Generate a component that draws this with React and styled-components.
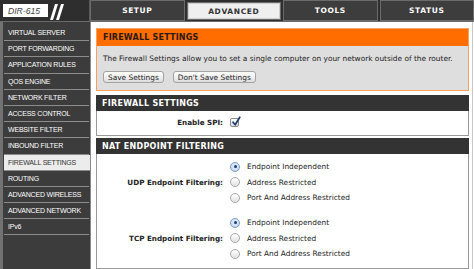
import React from "react";
import styled, { createGlobalStyle } from "styled-components";

const GlobalStyle = createGlobalStyle`
  html, body {
    margin: 0;
    padding: 0;
    background: #ffffff;
  }
  * {
    box-sizing: border-box;
  }
`;

const Page = styled.div`
  width: 474px;
  height: 269px;
  overflow: hidden;
  display: flex;
  flex-direction: column;
  font-family: "DejaVu Sans", Verdana, sans-serif;
  color: #222;
`;

const Header = styled.div`
  height: 22px;
  display: flex;
  background: #2e2e2e;
  border-bottom: 1px solid #6a6a6a;
`;

const LogoArea = styled.div`
  width: 90px;
  flex: none;
  border-right: 1px solid #5a5a5a;
`;

const Tabs = styled.div`
  flex: 1;
  display: grid;
  grid-template-columns: repeat(4, 1fr);
  gap: 2px;
`;

const Tab = styled.div`
  display: flex;
  align-items: center;
  justify-content: center;
  font-family: "DejaVu Sans", Verdana, sans-serif;
  font-weight: bold;
  font-size: 7.5px;
  letter-spacing: 0.6px;
  color: ${(p) => (p.$active ? "#333" : "#fff")};
  background: ${(p) => (p.$active ? "#efefef" : "#3d3d3d")};
  border: 1px solid #6b6b6b;
  box-shadow: ${(p) => (p.$active ? "inset 0 0 0 1px #cfcfcf" : "none")};
  margin-top: ${(p) => (p.$active ? "2px" : "0")};
  margin-bottom: ${(p) => (p.$active ? "1px" : "0")};
`;

const Body = styled.div`
  flex: 1;
  display: flex;
  min-height: 0;
`;

const Sidebar = styled.div`
  width: 91px;
  flex: none;
  background: #3c3c3c;
  border-left: 3px solid #727272;
  border-right: 1px solid #8a8a8a;
  padding-top: 3px;
`;

const NavItem = styled.div`
  height: 16.2px;
  display: flex;
  align-items: center;
  padding-left: 4px;
  margin-left: 1px;
  margin-right: ${(p) => (p.$active ? "0" : "1px")};
  font-family: "Liberation Sans", Arial, sans-serif;
  font-size: 7px;
  letter-spacing: -0.2px;
  color: ${(p) => (p.$active ? "#333" : "#fff")};
  background: ${(p) => (p.$active ? "#ececec" : "transparent")};
  border-bottom: 1px solid #8c8c8c;
`;

const Main = styled.div`
  flex: 1;
  display: flex;
  flex-direction: column;
  gap: 2px;
  padding: 6px 3px 0 5px;
  margin-right: 1px;
  border-right: 1px solid #c8c8c8;
`;

const OrangeBox = styled.div`
  border: 1px solid #f7a060;
  margin-bottom: 2px;
`;

const OrangeHead = styled.div`
  height: 17px;
  background: #ff6c00;
  display: flex;
  align-items: center;
  padding-left: 6px;
  font-weight: bold;
  font-size: 8px;
  letter-spacing: 0.2px;
  color: #2a1a10;
`;

const OrangeBody = styled.div`
  background: #dedede;
  padding: 7px 6px 7px;
  font-size: 7.4px;
  color: #222;
`;

const Intro = styled.div`
  height: 12px;
  line-height: 12px;
  margin-bottom: 6px;
`;

const ButtonRow = styled.div`
  display: flex;
  gap: 9px;
`;

const Button = styled.div`
  height: 12px;
  padding: 0 4px;
  display: flex;
  align-items: center;
  font-size: 7.4px;
  color: #222;
  background: linear-gradient(#ffffff, #ececec 60%, #dcdcdc);
  border: 1px solid #a3a3a3;
  border-radius: 3px;
`;

const Panel = styled.div`
  display: flex;
  flex-direction: column;
  flex: ${(p) => (p.$grow ? 1 : "none")};
`;

const PanelHead = styled.div`
  height: 16px;
  background: #333333;
  display: flex;
  align-items: center;
  padding-left: 6px;
  font-weight: bold;
  font-size: 8px;
  letter-spacing: 0.3px;
  color: #fff;
`;

const PanelBody = styled.div`
  flex: 1;
  background: #fff;
  border: 1px solid #9a9a9a;
  border-top: none;
  padding: ${(p) => p.$pad || "0"};
`;

const FormGrid = styled.div`
  display: grid;
  grid-template-columns: 126px auto;
  column-gap: 7px;
  align-items: center;
  row-gap: ${(p) => p.$rowGap || "0"};
`;

const Label = styled.div`
  text-align: right;
  font-weight: bold;
  font-size: 7.2px;
  color: #222;
`;

const Options = styled.div`
  display: flex;
  flex-direction: column;
`;

const Option = styled.div`
  height: 15.5px;
  display: flex;
  align-items: center;
  gap: 7px;
  font-size: 7.4px;
  color: #222;
`;

const Radio = styled.span`
  width: 10px;
  height: 10px;
  border-radius: 50%;
  flex: none;
  display: flex;
  align-items: center;
  justify-content: center;
  border: 1px solid ${(p) => (p.$on ? "#7d9bc6" : "#a8a8a8")};
  background: ${(p) =>
    p.$on
      ? "radial-gradient(circle at 50% 40%, #eaf2fc, #b9cfec)"
      : "linear-gradient(#ffffff, #e2e2e2)"};
  &::after {
    content: "";
    width: 3px;
    height: 3px;
    border-radius: 50%;
    background: ${(p) => (p.$on ? "#1d3c74" : "transparent")};
  }
`;

const CheckBox = styled.span`
  width: 9px;
  height: 9px;
  flex: none;
  display: flex;
  border: 1px solid #8d8d8d;
  border-radius: 2px;
  background: linear-gradient(#ffffff, #dcdcdc);
  position: relative;
  svg {
    position: absolute;
    left: 0px;
    top: -3px;
  }
`;

const Logo = () => (
  <svg width="90" height="21" viewBox="0 0 90 21">
    <rect x="3" y="4" width="45" height="13" fill="#fff" />
    <text
      x="8"
      y="13.8"
      fontFamily="Liberation Sans, Arial, sans-serif"
      fontStyle="italic"
      fontSize="8.6"
      fill="#444"
    >
      DIR-615
    </text>
    <polygon points="50,20 53,20 58,4 55,4" fill="#fff" />
    <polygon points="56,20 59,20 64,4 61,4" fill="#fff" />
  </svg>
);

const Check = () => (
  <svg width="10" height="11" viewBox="0 0 10 11">
    <path
      d="M2 6.2 L4.2 8.8 L8.8 1.2"
      fill="none"
      stroke="#1d3c74"
      strokeWidth="1.7"
      strokeLinecap="round"
      strokeLinejoin="round"
    />
  </svg>
);

const menu = [
  "VIRTUAL SERVER",
  "PORT FORWARDING",
  "APPLICATION RULES",
  "QOS ENGINE",
  "NETWORK FILTER",
  "ACCESS CONTROL",
  "WEBSITE FILTER",
  "INBOUND FILTER",
  "FIREWALL SETTINGS",
  "ROUTING",
  "ADVANCED WIRELESS",
  "ADVANCED NETWORK",
  "IPv6",
];

const choices = [
  "Endpoint Independent",
  "Address Restricted",
  "Port And Address Restricted",
];

const EndpointGroup = ({ label }) => (
  <>
    <Label>{label}</Label>
    <Options>
      {choices.map((c, i) => (
        <Option key={c}>
          <Radio $on={i === 0} />
          {c}
        </Option>
      ))}
    </Options>
  </>
);

export default function App() {
  return (
    <Page>
      <GlobalStyle />
      <Header>
        <LogoArea>
          <Logo />
        </LogoArea>
        <Tabs>
          <Tab>SETUP</Tab>
          <Tab $active>ADVANCED</Tab>
          <Tab>TOOLS</Tab>
          <Tab>STATUS</Tab>
        </Tabs>
      </Header>
      <Body>
        <Sidebar>
          {menu.map((m) => (
            <NavItem key={m} $active={m === "FIREWALL SETTINGS"}>
              {m}
            </NavItem>
          ))}
        </Sidebar>
        <Main>
          <OrangeBox>
            <OrangeHead>FIREWALL SETTINGS</OrangeHead>
            <OrangeBody>
              <Intro>
                The Firewall Settings allow you to set a single computer on
                your network outside of the router.
              </Intro>
              <ButtonRow>
                <Button>Save Settings</Button>
                <Button>Don't Save Settings</Button>
              </ButtonRow>
            </OrangeBody>
          </OrangeBox>
          <Panel>
            <PanelHead>FIREWALL SETTINGS</PanelHead>
            <PanelBody $pad="7px 0 8px">
              <FormGrid>
                <Label>Enable SPI:</Label>
                <CheckBox>
                  <Check />
                </CheckBox>
              </FormGrid>
            </PanelBody>
          </Panel>
          <Panel $grow>
            <PanelHead>NAT ENDPOINT FILTERING</PanelHead>
            <PanelBody $pad="5px 0 0">
              <FormGrid $rowGap="9.5px">
                <EndpointGroup label="UDP Endpoint Filtering:" />
                <EndpointGroup label="TCP Endpoint Filtering:" />
              </FormGrid>
            </PanelBody>
          </Panel>
        </Main>
      </Body>
    </Page>
  );
}
